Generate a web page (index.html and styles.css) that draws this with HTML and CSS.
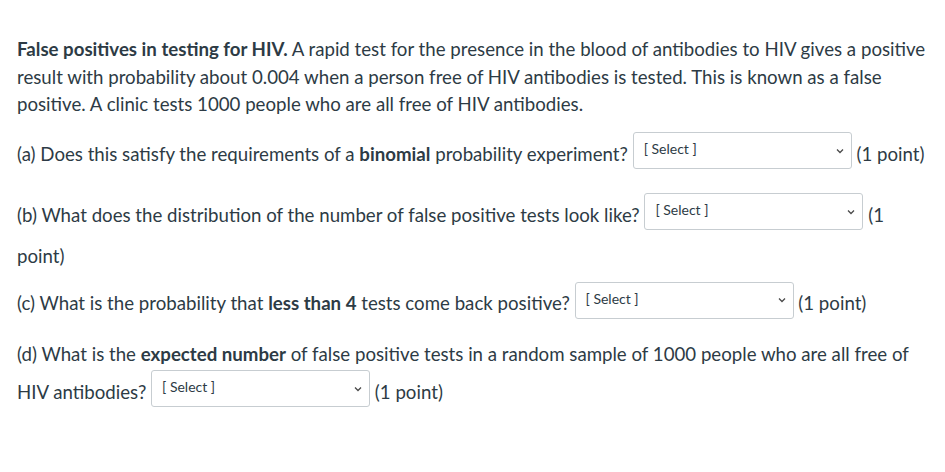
FILE: index.html
```html
<!DOCTYPE html>
<html>
<head>
<meta charset="utf-8">
<link rel="stylesheet" href="styles.css">
</head>
<body>
<div class="question">
  <p class="intro"><strong>False positives in testing for HIV.</strong> A rapid test for the presence in the blood of antibodies to HIV gives a positive result with probability about 0.004 when a person free of HIV antibodies is tested. This is known as a false positive. A clinic tests 1000 people who are all free of HIV antibodies.</p>
  <p class="part">(a) Does this satisfy the requirements of a <strong>binomial</strong> probability experiment? <span class="select"><span class="select-inner"><span class="select-text">[ Select ]</span><svg class="chev" width="8" height="6" viewBox="0 0 8 6"><polyline points="1,1.5 4,4.5 7,1.5" fill="none" stroke="#4a4a4a" stroke-width="1.3"/></svg></span></span> (1 point)</p>
  <p class="part">(b) What does the distribution of the number of false positive tests look like? <span class="select"><span class="select-inner"><span class="select-text">[ Select ]</span><svg class="chev" width="8" height="6" viewBox="0 0 8 6"><polyline points="1,1.5 4,4.5 7,1.5" fill="none" stroke="#4a4a4a" stroke-width="1.3"/></svg></span></span> (1 point)</p>
  <p class="part">(c) What is the probability that <strong>less than 4</strong> tests come back positive? <span class="select"><span class="select-inner"><span class="select-text">[ Select ]</span><svg class="chev" width="8" height="6" viewBox="0 0 8 6"><polyline points="1,1.5 4,4.5 7,1.5" fill="none" stroke="#4a4a4a" stroke-width="1.3"/></svg></span></span> (1 point)</p>
  <p class="part">(d) What is the <strong>expected number</strong> of false positive tests in a random sample of 1000 people who are all free of HIV antibodies? <span class="select"><span class="select-inner"><span class="select-text">[ Select ]</span><svg class="chev" width="8" height="6" viewBox="0 0 8 6"><polyline points="1,1.5 4,4.5 7,1.5" fill="none" stroke="#4a4a4a" stroke-width="1.3"/></svg></span></span> (1 point)</p>
</div>
</body>
</html>
```
FILE: styles.css
```css
html, body {
  margin: 0;
  padding: 0;
  background: #ffffff;
}
body {
  font-family: Lato, "Open Sans", sans-serif;
  color: #2d3b45;
  font-size: 18.66px;
  line-height: 27.5px;
}
.question {
  width: 913px;
  padding: 36px 0 0 17px;
}
.question p {
  margin: 0 0 10px 0;
}
.question p.intro {
  margin-bottom: 12px;
}
.question strong {
  font-weight: 700;
}
.select {
  display: inline-block;
  overflow: hidden;
  box-sizing: border-box;
  width: 219px;
  height: 37px;
  margin: 1.5px 0 12.5px 0;
  border: 1px solid #c7cdd1;
  border-radius: 3px;
  background: #fff;
  vertical-align: -21.5px;
  line-height: 1;
}
.select-inner {
  display: flex;
  align-items: center;
  justify-content: space-between;
  height: 100%;
  padding: 0 7px 0 10px;
}
.select-text {
  font-size: 14px;
  color: #2d3b45;
  margin-top: -3px;
}
.chev {
  display: block;
}
```
